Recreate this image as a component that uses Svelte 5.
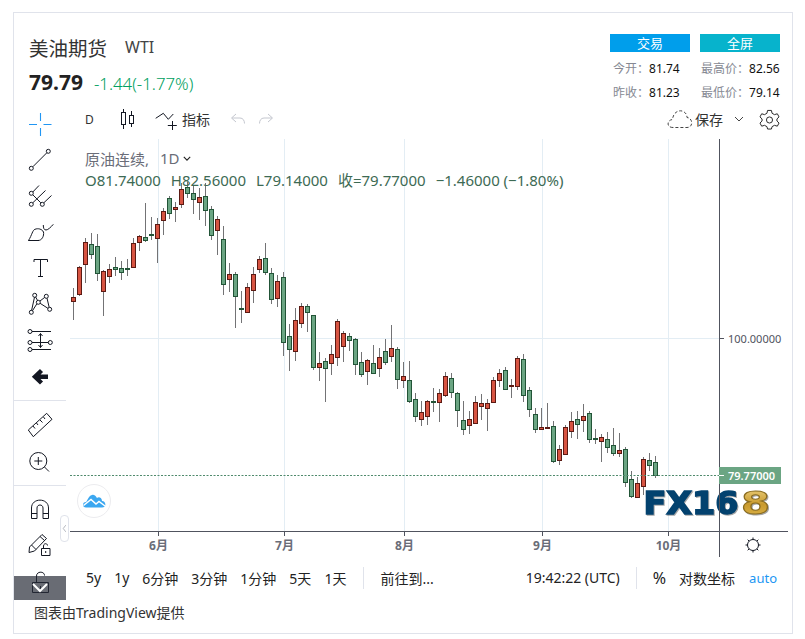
<script lang="ts">
	// [wick top, body top, body bottom, wick bottom, 1 = red]  x = 73.5 + 6 * index
	const candles = [
		[288,297,301,320,1],[266,267,294,296,1],[238,242,264,283,1],[233,244,254,259,0],[234,246,273,281,0],
		[270,271,291,316,1],[264,269,276,283,1],[257,267,269,276,0],[261,268,272,280,0],[259,268,269,276,0],
		[238,243,267,268,1],[235,236,242,251,1],[203,237,240,242,0],[217,234,235,240,0],[218,224,238,263,1],
		[208,211,220,235,1],[196,198,213,219,0],[202,207,209,222,1],[183,189,204,208,1],[182,187,193,198,0],
		[185,193,199,214,0],[188,197,202,220,1],[183,196,210,226,0],[206,209,235,240,0],[216,219,230,255,1],
		[226,239,284,295,0],[263,274,279,292,1],[272,274,296,328,0],[291,308,309,323,0],[283,287,312,313,1],
		[267,274,290,303,1],[256,259,269,273,1],[243,258,272,275,0],[268,273,299,304,0],[275,281,298,307,1],
		[272,277,342,356,0],[324,336,349,371,0],[308,320,351,361,1],[303,306,323,328,1],[304,306,312,332,0],
		[315,315,367,370,0],[352,363,367,381,1],[358,361,368,402,0],[345,354,363,375,1],[319,321,357,366,1],
		[331,333,346,362,1],[333,336,340,351,0],[338,339,364,375,0],[352,362,374,377,0],[359,360,371,385,1],
		[345,363,373,374,0],[348,357,368,377,1],[339,351,362,365,0],[325,348,356,362,1],[347,349,379,389,0],
		[362,376,380,388,1],[361,380,401,403,0],[393,399,416,422,0],[401,412,419,426,1],[400,401,416,425,1],
		[388,401,402,412,0],[389,393,402,422,1],[372,376,395,397,1],[373,378,392,398,0],[392,393,410,427,0],
		[401,420,429,435,0],[411,419,425,434,1],[396,402,423,424,1],[394,403,406,420,1],[399,403,408,431,1],
		[377,380,402,403,1],[369,373,380,387,1],[367,370,389,389,0],[379,385,386,398,1],[356,358,386,390,1],
		[354,359,395,402,0],[387,390,409,417,0],[408,414,429,433,0],[408,427,429,430,1],[403,427,428,428,1],
		[421,426,461,463,0],[445,449,460,465,1],[425,427,454,455,1],[412,421,431,438,1],[411,419,424,439,0],
		[404,416,420,432,1],[411,413,439,443,0],[429,438,439,444,0],[434,437,441,462,1],[432,439,447,453,0],
		[428,445,453,456,0],[433,450,453,457,1],[447,449,482,487,0],[471,479,496,498,0],[477,483,497,498,1],
		[457,459,486,495,1],[453,460,465,471,0],[456,462,475,478,0]
	];
	const months = [
		{ x: 158.5, label: "6月" },
		{ x: 284.5, label: "7月" },
		{ x: 404.5, label: "8月" },
		{ x: 542.5, label: "9月" },
		{ x: 668.5, label: "10月" }
	];
	const ranges = ["5y", "1y", "6分钟", "3分钟", "1分钟", "5天", "1天"];
</script>

<div class="widget">
	<header class="head">
		<div class="quote">
			<div class="title"><span class="name">美油期货</span><span class="code">WTI</span></div>
			<div class="price"><b>79.79</b><span class="chg">-1.44(-1.77%)</span></div>
		</div>
		<div class="side">
			<div class="btns">
				<a class="btn trade" href="#trade">交易</a>
				<a class="btn full" href="#full">全屏</a>
			</div>
			<div class="stats">
				<div><span>今开：</span>81.74</div>
				<div><span>最高价：</span>82.56</div>
				<div><span>昨收：</span>81.23</div>
				<div><span>最低价：</span>79.14</div>
			</div>
		</div>
	</header>

	<div class="body">
		<aside class="tools">
			<div class="tool">
				<svg viewBox="0 0 28 28"><path class="blue" d="M3 14.5h8M17.500 14.500h8M14.500 3v8M14.500 18v8" /></svg>
			</div>
			<div class="tool">
				<svg viewBox="0 0 28 28"><path d="M6.800 20.800L20.800 6.800" /><circle cx="5.300" cy="22.300" r="2" /><circle cx="22.300" cy="5.300" r="2" /></svg>
			</div>
			<div class="tool">
				<svg viewBox="0 0 28 28"><path d="M6.800 10L13 3.500M6.800 20.800L19.500 8.500M17.800 20.800L25.500 13.500M6.800 12.800L14.800 20.800" /><circle cx="5.300" cy="11.300" r="2" /><circle cx="5.300" cy="22.300" r="2" /><circle cx="16.300" cy="22.300" r="2" /></svg>
			</div>
			<div class="tool">
				<svg viewBox="0 0 28 28"><path d="M2.500 22.500C6 17 6.500 12 9 11.300C12 10 16 11 17.500 14C18.200 18 16 22.500 12 22.500ZM2.500 22.500H13M17.300 7C17.300 10 18 12 20 12C22 12 25 9 27.300 6.300" /></svg>
			</div>
			<div class="tool">
				<svg viewBox="0 0 28 28"><path d="M8 8V5.500H21.500V8M14.500 5.500V22.500M12 22.500H17" /></svg>
			</div>
			<div class="tool">
				<svg viewBox="0 0 28 28"><path d="M8.500 7.200L5.600 20.400M9.600 7L11.600 10.500M14 11L18.700 7.400M21 8.200L23.200 17.400M14.100 13.300L21.900 18.300M10.800 13.900L6.500 20.700" /><circle cx="8.700" cy="5.300" r="2" /><circle cx="20.300" cy="6.300" r="2" /><circle cx="12.300" cy="12.300" r="2" /><circle cx="23.700" cy="19.300" r="2" /><circle cx="5.300" cy="22.300" r="2" /></svg>
			</div>
			<div class="tool">
				<svg viewBox="0 0 28 28"><path d="M6 5.500H25M6 16.500H22.300M6 23.500H25M14.500 7.500V21.500M12.500 10L14.500 7.500L16.500 10M12.500 19L14.500 21.500L16.500 19" /><circle cx="4" cy="5.500" r="2" /><circle cx="4" cy="16.500" r="2" /><circle cx="4" cy="23.500" r="2" /><circle cx="24.300" cy="16.500" r="2" /></svg>
			</div>
			<div class="tool">
				<svg viewBox="0 0 28 28"><path class="thick" d="M22 14.800H10M15.500 8.500L9 14.800L15.500 21" /></svg>
			</div>
			<div class="sep"></div>
			<div class="tool">
				<svg viewBox="0 0 28 28"><path d="M2.300 19L20.700 2.300L26 8.300L7.300 25.700ZM7 15L9 17.500M10.500 12L12 14M14 9L16.500 11.500M17.500 6L19 8" /></svg>
			</div>
			<div class="tool">
				<svg viewBox="0 0 28 28"><circle cx="12.300" cy="14" r="8.500" /><path d="M18.500 20L23 24.500M12.300 10V18M8.300 14H16.300" /></svg>
			</div>
			<div class="sep"></div>
			<div class="tool">
				<svg viewBox="0 0 28 28"><path d="M5.500 22.500V12C5.500 1.500 22.500 1.500 22.500 12V22.500H17V12C17 8 11 8 11 12V22.500ZM5.500 17.500H11M17 17.500H22.500" /></svg>
			</div>
			<div class="tool">
				<svg viewBox="0 0 28 28"><path d="M3.500 15L16 2.500L20.500 6.500L8.500 19L3 20.500ZM5.500 13L10 17.500M14 4.500L18.500 8.500M15.500 16.500H24V23.500H15.500ZM17.500 16.500V14C17.500 11 21.500 11 21.500 13.500M19.700 19V21" /></svg>
			</div>
			<div class="tool">
				<svg viewBox="0 0 28 28"><path d="M6.500 14.500H22.500V24.500H6.500ZM10.500 14.500V8C10.500 3 18.500 3 18.500 7.500M14.500 18V21" /></svg>
			</div>
			<div class="more">
				<svg viewBox="0 0 24 12"><path d="M5 2L12 9L19 2" /></svg>
			</div>
		</aside>

		<main class="pane">
			<div class="bar">
				<span class="interval">D</span>
				<svg class="candle-ico" viewBox="0 0 18 22"><path d="M4.500 1V4.500M4.500 16.500V21M12.500 3V7.500M12.500 15.500V19" /><rect x="2.500" y="4.500" width="4" height="12" /><rect x="10.500" y="7.500" width="4" height="8" /></svg>
				<span class="ind">
					<svg viewBox="0 0 26 22"><path d="M1.700 10.300L9.300 5.300L14.300 11.300L19.300 6M13.800 17.500H22.800M18.500 13V22" /></svg>
					指标
				</span>
				<svg class="hist first" viewBox="0 0 16 12"><path d="M6 1L1.500 5L6 9M2 5H10C13 5 14.500 7.500 14.500 10.500" /></svg>
				<svg class="hist" viewBox="0 0 16 12"><path d="M10 1L14.500 5L10 9M14 5H6C3 5 1.500 7.500 1.500 10.500" /></svg>
				<span class="grow"></span>
				<svg class="cloud" viewBox="0 0 26 20"><path d="M6 18.500C-1 18.500 0 11 5.500 10.500C6 4 11 1 15 2C18 3 20 5 20 8.500C26 9 26.500 18.500 20 18.500Z" /></svg>
				<span class="save">保存</span>
				<svg class="caret" viewBox="0 0 10 6"><path d="M1 1L5 5L9 1" /></svg>
				<svg class="gear" viewBox="0 0 22 22"><path d="M9 1.500H13L13.700 4.500L16.200 5.900L19.200 5L21 8.300L18.800 10.400V12.600L21 14.700L19.200 18L16.200 17.100L13.700 18.500L13 21H9L8.300 18.500L5.800 17.100L2.800 18L1 14.700L3.200 12.600V10.400L1 8.300L2.800 5L5.800 5.900L8.300 4.500Z" /><circle cx="11" cy="11.500" r="3.200" /></svg>
			</div>

			<div class="chart">
				<svg class="plot" viewBox="66 139 726 418">
					{#each months as m}
						<line class="grid" x1={m.x} x2={m.x} y1="139" y2="531" />
					{/each}
					<line class="grid" x1="70" x2="719" y1="338.500" y2="338.500" />

					{#each candles as c, i}
						{@const x = 73.5 + 6 * i}
						<line class="wick" x1={x} x2={x} y1={c[0]} y2={c[3]} />
						<rect class={c[4] ? "down" : "up"} x={x - 2} y={c[1] + 0.5} width="4" height={c[2] - c[1]} />
					{/each}

					<line class="last" x1="70" x2="719" y1="475.500" y2="475.500" />

					<defs>
						<linearGradient id="gold" x1="0" x2="0" y1="0" y2="1">
							<stop offset="0" stop-color="#f1d98c" />
							<stop offset="0.55" stop-color="#c99a2e" />
							<stop offset="1" stop-color="#e0b94f" />
						</linearGradient>
					</defs>
					<text class="logo" x="643.500" y="513.500" textLength="95" lengthAdjust="spacingAndGlyphs">FX16</text>
					<text class="logo gold" x="741" y="513.500" textLength="29" lengthAdjust="spacingAndGlyphs">8</text>

					<line class="axis" x1="719.500" x2="719.500" y1="139" y2="557" />
					<line class="axis" x1="70" x2="788" y1="531.500" y2="531.500" />
					{#each months as m}
						<line class="axis" x1={m.x} x2={m.x} y1="531" y2="536" />
						<text class="month" x={m.x} y="550">{m.label}</text>
					{/each}
					<line class="axis" x1="719" x2="724" y1="338.500" y2="338.500" />
					<text class="scale" x="728" y="343">100.00000</text>
					<rect class="tag" x="719" y="467" width="62" height="17" />
					<line class="tag-tick" x1="719" x2="724" y1="475.500" y2="475.500" />
					<text class="tag-txt" x="728" y="480">79.77000</text>

					<g class="sun">
						<circle cx="753" cy="545" r="5.500" />
						<path d="M753 537.500v2M753 550.500v2M745.500 545h2M758.500 545h2M747.700 539.700l1.400 1.400M756.900 548.900l1.400 1.400M747.700 550.300l1.400-1.400M756.900 541.100l1.400-1.400" />
					</g>
				</svg>

				<div class="legend">
					<div class="sym"><span class="sym-name">原油连续,</span> 1D <svg viewBox="0 0 10 6"><path d="M1 1L5 5L9 1" /></svg></div>
					<div class="ohlc">
						<span>O81.74000</span><span>H82.56000</span><span>L79.14000</span><span>收=79.77000</span><span>−1.46000 (−1.80%)</span>
					</div>
				</div>

				<div class="badge">
					<svg viewBox="0 0 24 16"><path class="fill" d="M4 14.500C0 14.500 0 9 4 9C5 9 6 3 10 2C13 1 14 4 15 5C17 3 20 5 20 8C24 8 25 14.500 20 14.500Z" /><path class="zig" d="M1.500 12.500L9 6.500L14 11L17 8.500L23 13" /></svg>
				</div>
			</div>

			<div class="ranges">
				{#each ranges as r}
					<span>{r}</span>
				{/each}
				<i class="div left"></i>
				<span class="goto">前往到...</span>
				<span class="grow"></span>
				<span class="clock">19:42:22 (UTC)</span>
				<i class="div"></i>
				<span class="pct">%</span>
				<span>对数坐标</span>
				<span class="auto">auto</span>
			</div>
		</main>

		<div class="collapse">
			<svg viewBox="0 0 6 10"><path d="M4.500 1L1.500 5L4.500 9" /></svg>
		</div>
	</div>

	<footer class="foot">图表由TradingView提供</footer>
</div>

<style>
	:global(body) {
		margin: 0;
		background: #fff;
	}
	.widget {
		position: relative;
		box-sizing: border-box;
		width: 780px;
		height: 622px;
		margin: 12px 0 0 13px;
		border: 1px solid #e0e3eb;
		font-family: "Noto Sans", "Noto Sans CJK SC", sans-serif;
		color: #131722;
	}
	svg {
		display: block;
		fill: none;
	}

	.head {
		display: flex;
		justify-content: space-between;
		height: 93px;
		box-sizing: border-box;
	}
	.quote {
		padding: 21px 0 0 15px;
	}
	.title {
		display: flex;
		align-items: center;
		height: 26px;
		font-size: 19.5px;
		color: #333;
	}
	.code {
		margin-left: 18px;
		font-size: 16px;
		color: #444;
	}
	.price {
		display: flex;
		align-items: baseline;
		margin-top: 8px;
		line-height: 28px;
	}
	.price b {
		font-size: 21px;
		color: #222;
	}
	.chg {
		margin-left: 11px;
		font-size: 16.800px;
		font-weight: 300;
		color: #00a060;
	}
	.side {
		width: 170px;
		padding: 21px 12px 0 0;
	}
	.btns {
		display: flex;
		justify-content: space-between;
	}
	.btn {
		width: 80px;
		height: 18px;
		line-height: 18px;
		text-align: center;
		font-size: 13px;
		color: #fff;
		text-decoration: none;
	}
	.trade {
		background: #009eeb;
	}
	.full {
		background: #07b3cc;
	}
	.stats {
		display: grid;
		grid-template-columns: 88px auto;
		margin: 5px 0 0 3px;
		font-size: 12px;
		line-height: 24px;
		color: #111;
		white-space: nowrap;
	}
	.stats span {
		color: #868993;
	}

	.body {
		position: relative;
		display: flex;
		height: 494px;
	}
	.tools {
		position: relative;
		width: 52px;
		flex: none;
		overflow: hidden;
	}
	.tool {
		display: flex;
		align-items: center;
		justify-content: center;
		height: 36px;
	}
	.tool svg {
		width: 28px;
		height: 28px;
		stroke: #131722;
		stroke-width: 1;
	}
	.tool .blue {
		stroke: #2196f3;
		stroke-width: 1.1;
	}
	.tool .thick {
		stroke-width: 4.400;
	}
	.sep {
		height: 1px;
		margin: 6px 0;
		background: #e0e3eb;
	}
	.more {
		position: absolute;
		left: 0;
		right: 0;
		bottom: 0;
		height: 24px;
		display: flex;
		align-items: center;
		justify-content: center;
		background: rgba(42, 46, 57, 0.7);
	}
	.more svg {
		width: 24px;
		height: 12px;
		stroke: #fff;
		stroke-width: 2;
	}

	.pane {
		flex: 1;
		min-width: 0;
		display: flex;
		flex-direction: column;
	}
	.bar {
		display: flex;
		align-items: center;
		height: 33px;
		box-sizing: border-box;
		padding: 0 12px 7px 19px;
		font-size: 14px;
		color: #333;
	}
	.interval {
		width: 34px;
		font-size: 12px;
	}
	.candle-ico {
		width: 18px;
		height: 22px;
		stroke: #131722;
	}
	.ind {
		display: flex;
		align-items: center;
		gap: 2px;
		margin-left: 17px;
	}
	.ind svg {
		width: 26px;
		height: 22px;
		stroke: #131722;
	}
	.hist {
		width: 16px;
		height: 12px;
		stroke: #c4c7cf;
		margin-left: 12px;
	}
	.hist.first {
		margin-left: 20px;
	}
	.grow {
		flex: 1;
	}
	.cloud {
		width: 26px;
		height: 20px;
		stroke: #444;
		stroke-dasharray: 3 2;
		margin-right: 2px;
	}
	.caret {
		width: 10px;
		height: 6px;
		margin-left: 11px;
		stroke: #444;
	}
	.gear {
		width: 21px;
		height: 21px;
		margin-left: 15px;
		stroke: #222;
	}

	.chart {
		position: relative;
		height: 418px;
		flex: none;
	}
	.plot {
		width: 726px;
		height: 418px;
	}
	.grid {
		stroke: #e3edf4;
		stroke-width: 1;
	}
	.wick {
		stroke: #737375;
		stroke-width: 1;
	}
	.up {
		fill: #6ba583;
		stroke: #225437;
	}
	.down {
		fill: #d75442;
		stroke: #5b1a13;
	}
	.last {
		stroke: #4f8a6c;
		stroke-dasharray: 2 1.500;
	}
	.axis {
		stroke: #50535e;
		stroke-width: 1;
	}
	.month {
		font-size: 12px;
		font-weight: 700;
		fill: #6a6d78;
		text-anchor: middle;
	}
	.scale {
		font-size: 11px;
		fill: #50535e;
	}
	.tag {
		fill: #6ba583;
	}
	.tag-tick {
		stroke: #fff;
	}
	.tag-txt {
		font-size: 11px;
		font-weight: 600;
		fill: #fff;
	}
	.logo {
		font-family: "DejaVu Sans", sans-serif;
		font-weight: 700;
		font-size: 32px;
		fill: #03426f;
		stroke: #03426f;
		stroke-width: 1.600;
		filter: drop-shadow(1px 1px 0 rgba(0, 0, 0, 0.35));
	}
	.logo.gold {
		fill: url(#gold);
		stroke: #8a6c20;
		stroke-width: 1;
	}
	.sun {
		stroke: #131722;
	}

	.legend {
		position: absolute;
		left: 19px;
		top: 8px;
		font-size: 15px;
		pointer-events: none;
	}
	.sym {
		display: flex;
		align-items: center;
		gap: 3px;
		height: 22px;
		color: #6a6d78;
	}
	.sym-name {
		margin-right: 8px;
	}
	.sym svg {
		width: 8px;
		height: 5px;
		stroke: #222;
		stroke-width: 1.400;
	}
	.ohlc {
		display: flex;
		gap: 10px;
		height: 22px;
		line-height: 23px;
		color: #3d6a54;
		white-space: nowrap;
	}
	.badge {
		position: absolute;
		left: 11px;
		top: 345px;
		box-sizing: border-box;
		width: 34px;
		height: 34px;
		display: flex;
		align-items: center;
		justify-content: center;
		background: #fff;
		border: 1px solid #ececef;
		border-radius: 50%;
	}
	.badge svg {
		width: 24px;
		height: 16px;
	}
	.badge .fill {
		fill: #3ba7f0;
	}
	.badge .zig {
		stroke: #fff;
		stroke-width: 1.500;
	}

	.ranges {
		display: flex;
		align-items: center;
		gap: 13px;
		height: 43px;
		box-sizing: border-box;
		padding: 0 15px 2px 20px;
		font-size: 14px;
		color: #222;
		white-space: nowrap;
	}
	.div {
		width: 1px;
		height: 22px;
		margin-left: 3px;
		background: #e0e3eb;
	}
	.div.left {
		margin-left: 4px;
	}
	.goto {
		margin-left: 3px;
	}
	.pct {
		margin-left: 3px;
		font-size: 16px;
	}
	.auto {
		margin-left: 1px;
		font-size: 13px;
		color: #2196f3;
	}

	.collapse {
		position: absolute;
		left: 46px;
		top: 409px;
		box-sizing: border-box;
		width: 9px;
		height: 27px;
		display: flex;
		align-items: center;
		justify-content: center;
		background: #fff;
		border: 1px solid #e0e3eb;
		border-radius: 4px;
	}
	.collapse svg {
		width: 5px;
		height: 9px;
		stroke: #a6a9b3;
	}

	.foot {
		padding: 3px 0 0 20px;
		font-size: 14px;
		line-height: 20px;
		color: #333;
	}
</style>
